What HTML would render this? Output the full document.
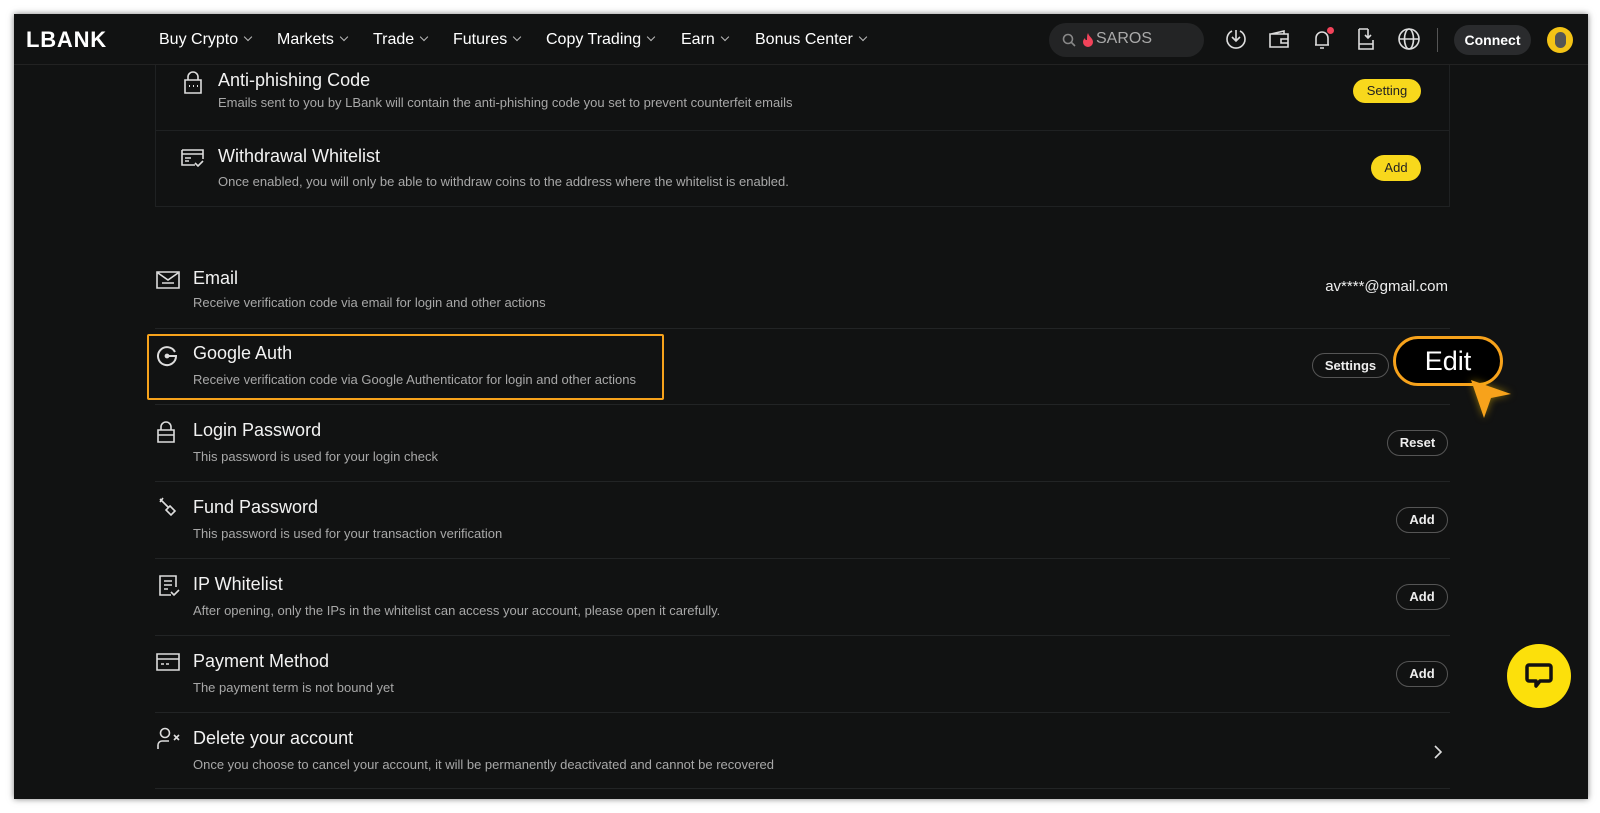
<!DOCTYPE html>
<html><head><meta charset="utf-8"><style>
*{margin:0;padding:0;box-sizing:border-box}
body{width:1600px;height:813px;background:#fff;position:relative;overflow:hidden;font-family:"Liberation Sans",sans-serif;color:#fff}
#app{position:absolute;left:14px;top:14px;width:1574px;height:785px;background:#111212;box-shadow:0 0 6px rgba(0,0,0,.5);overflow:hidden}
.a{position:absolute}
.nav{font-size:16px;top:17px;white-space:nowrap}
.nav:after{content:"";display:inline-block;width:5px;height:5px;border-right:1.2px solid #bbb;border-bottom:1.2px solid #bbb;transform:rotate(45deg);margin-left:7px;vertical-align:4px}
.t{font-size:18px;color:#f2f2f2;white-space:nowrap}
.d{font-size:13px;color:#a8a8a8;white-space:nowrap}
.line{height:1px;background:#222425;left:141px;width:1295px}
.btn{border:1px solid #555;border-radius:14px;font-size:13px;font-weight:bold;text-align:center;color:#eee}
.yb{background:#f8d81c;color:#222;border-radius:13px;font-size:13px;text-align:center}
svg{position:absolute;fill:none;stroke:#ddd;stroke-width:1.6}
</style></head><body><div id="app">
<div class="a" style="left:0;top:0;width:1574px;height:51px;border-bottom:1px solid #222"></div>
<div class="a" style="left:12px;top:13px;font-size:22px;font-weight:bold;letter-spacing:0.8px">LBANK</div>
<div class="a nav" style="left:145px">Buy Crypto</div>
<div class="a nav" style="left:263px">Markets</div>
<div class="a nav" style="left:359px">Trade</div>
<div class="a nav" style="left:439px">Futures</div>
<div class="a nav" style="left:532px">Copy Trading</div>
<div class="a nav" style="left:667px">Earn</div>
<div class="a nav" style="left:741px">Bonus Center</div>
<div class="a" style="left:1035px;top:9px;width:155px;height:34px;border-radius:17px;background:#232425"></div>
<svg style="left:1048px;top:19px" width="14" height="14" viewBox="0 0 14 14"><circle cx="6" cy="6" r="4.5" stroke="#888"/><path d="M9.5 9.5L13 13" stroke="#888"/></svg>
<svg style="left:1068px;top:18px" width="12" height="15" viewBox="0 0 12 15"><path d="M6 1C7 5 11 6 11 10a5 5 0 0 1-10 0c0-2 1-3 2-4 0 2 1 2 2 2C5 5 5 3 6 1z" fill="#f2435a" stroke="none"/></svg>
<div class="a" style="left:1082px;top:16px;font-size:16px;color:#aaa">SAROS</div>
<svg style="left:1210px;top:13px" width="24" height="24" viewBox="0 0 24 24"><path d="M8 4a9 9 0 1 0 8 0"/><path d="M12 3v11M8 10l4 4 4-4"/></svg>
<svg style="left:1254px;top:14px" width="22" height="22" viewBox="0 0 22 22"><path d="M2 6h18v13H2zM3 6l13-3v3M13 11h7v4h-7z"/></svg>
<svg style="left:1296px;top:13px" width="24" height="24" viewBox="0 0 24 24"><path d="M6 18V11a6 6 0 0 1 12 0v7H5h14M10 21h4"/></svg>
<div class="a" style="left:1313px;top:13px;width:7px;height:7px;border-radius:50%;background:#f2435a"></div>
<svg style="left:1340px;top:12px" width="24" height="26" viewBox="0 0 24 26"><path d="M5 3h9M5 3v20h14v-9M5 18h14M14 3v9M11 9l3 3 3-3"/></svg>
<svg style="left:1383px;top:13px" width="24" height="24" viewBox="0 0 24 24"><circle cx="12" cy="12" r="10"/><ellipse cx="12" cy="12" rx="4.5" ry="10"/><path d="M2 12h20"/></svg>
<div class="a" style="left:1423px;top:14px;width:1px;height:24px;background:#555"></div>
<div class="a" style="left:1440px;top:11px;width:77px;height:30px;border-radius:15px;background:#2a2b2d;font-size:14px;font-weight:bold;text-align:center;line-height:30px">Connect</div>
<div class="a" style="left:1533px;top:13px;width:26px;height:26px;border-radius:50%;background:#f3c316"><div class="a" style="left:8px;top:5px;width:11px;height:16px;border-radius:6px;background:#555"></div></div>

<!-- top card -->
<div class="a" style="left:141px;top:51px;width:1295px;height:142px;border:1px solid #1f2122;border-top:none"></div>
<svg style="left:168px;top:57px" width="22" height="24" viewBox="0 0 22 24"><path d="M6 9V6a5 5 0 0 1 10 0v3M3 9h16v13H3z"/><path d="M7 15h1M11 15h1M15 15h1" stroke-width="2"/></svg>
<div class="a t" style="left:204px;top:56px">Anti-phishing Code</div>
<div class="a d" style="left:204px;top:81px">Emails sent to you by LBank will contain the anti-phishing code you set to prevent counterfeit emails</div>
<div class="a yb" style="left:1339px;top:65px;width:68px;height:24px;line-height:24px">Setting</div>
<div class="a" style="left:142px;top:116px;width:1293px;height:1px;background:#1f2122"></div>
<svg style="left:166px;top:134px" width="26" height="20" viewBox="0 0 26 20"><path d="M2 2h21v9M2 2v15h13M2 6h21M5 10h6M5 13h4M15 15l3 3 5-5"/></svg>
<div class="a t" style="left:204px;top:132px">Withdrawal Whitelist</div>
<div class="a d" style="left:204px;top:160px">Once enabled, you will only be able to withdraw coins to the address where the whitelist is enabled.</div>
<div class="a yb" style="left:1357px;top:141px;width:50px;height:26px;line-height:26px">Add</div>

<!-- rows -->
<svg style="left:142px;top:256px" width="24" height="20" viewBox="0 0 24 20"><path d="M1 2h22v16H1zM2 3l10 7 10-7M6 13h12"/></svg>
<div class="a t" style="left:179px;top:254px">Email</div>
<div class="a d" style="left:179px;top:281px">Receive verification code via email for login and other actions</div>
<div class="a" style="right:140px;top:264px;font-size:15px;color:#eee">av****@gmail.com</div>
<div class="a line" style="top:314px"></div>

<div class="a" style="left:133px;top:320px;width:517px;height:66px;border:2.5px solid #f7a21b;border-radius:2px"></div>
<svg style="left:141px;top:329px" width="24" height="24" viewBox="0 0 24 24"><path d="M20 9A9 9 0 1 0 21 13H12" stroke-width="2"/><circle cx="12" cy="13" r="1.6" fill="#ddd"/></svg>
<div class="a t" style="left:179px;top:329px">Google Auth</div>
<div class="a d" style="left:179px;top:358px">Receive verification code via Google Authenticator for login and other actions</div>
<div class="a btn" style="left:1298px;top:339px;width:77px;height:25px;line-height:23px">Settings</div>
<div class="a" style="left:1379px;top:322px;width:110px;height:50px;border:3px solid #f7a21b;border-radius:25px;background:#000;font-size:27px;text-align:center;line-height:44px">Edit</div>
<svg style="left:1455px;top:364px;filter:drop-shadow(0 0 4px rgba(255,200,0,.5))" width="50" height="42" viewBox="0 0 50 42"><path d="M2 2L42 16 22 20 15 40Z" fill="#f7a21b" stroke="none"/></svg>
<div class="a line" style="top:390px"></div>

<svg style="left:142px;top:406px" width="20" height="24" viewBox="0 0 20 24"><path d="M5 10V7a5 5 0 0 1 10 0v3M2 10h16v12H2zM2 15h16"/></svg>
<div class="a t" style="left:179px;top:406px">Login Password</div>
<div class="a d" style="left:179px;top:435px">This password is used for your login check</div>
<div class="a btn" style="left:1373px;top:416px;width:61px;height:26px;line-height:24px">Reset</div>
<div class="a line" style="top:467px"></div>

<svg style="left:143px;top:482px" width="24" height="24" viewBox="0 0 24 24"><path d="M3 3l5 5M6 2l-3 4M8 8l3 3M13 10l5 5-4 4-5-5z"/></svg>
<div class="a t" style="left:179px;top:483px">Fund Password</div>
<div class="a d" style="left:179px;top:512px">This password is used for your transaction verification</div>
<div class="a btn" style="left:1382px;top:493px;width:52px;height:26px;line-height:24px">Add</div>
<div class="a line" style="top:544px"></div>

<svg style="left:143px;top:559px" width="24" height="26" viewBox="0 0 24 26"><path d="M14 22H3V3h16v11M7 8h8M7 12h8M7 16h4M14 19l3 3 5-5"/></svg>
<div class="a t" style="left:179px;top:560px">IP Whitelist</div>
<div class="a d" style="left:179px;top:589px">After opening, only the IPs in the whitelist can access your account, please open it carefully.</div>
<div class="a btn" style="left:1382px;top:570px;width:52px;height:26px;line-height:24px">Add</div>
<div class="a line" style="top:621px"></div>

<svg style="left:142px;top:638px" width="24" height="20" viewBox="0 0 24 20"><path d="M1 2h22v16H1zM1 7h22M5 12h3M10 12h3"/></svg>
<div class="a t" style="left:179px;top:637px">Payment Method</div>
<div class="a d" style="left:179px;top:666px">The payment term is not bound yet</div>
<div class="a btn" style="left:1382px;top:647px;width:52px;height:26px;line-height:24px">Add</div>
<div class="a line" style="top:698px"></div>

<svg style="left:142px;top:713px" width="26" height="24" viewBox="0 0 26 24"><circle cx="9" cy="6" r="4.5"/><path d="M2 22v-4a4 4 0 0 1 4-4h7M18 8l5 5M23 8l-5 5"/></svg>
<div class="a t" style="left:179px;top:714px">Delete your account</div>
<div class="a d" style="left:179px;top:743px">Once you choose to cancel your account, it will be permanently deactivated and cannot be recovered</div>
<svg style="left:1419px;top:731px" width="10" height="14" viewBox="0 0 10 14"><path d="M2 1l6 6-6 6"/></svg>
<div class="a line" style="top:774px"></div>

<div class="a" style="left:1493px;top:630px;width:64px;height:64px;border-radius:50%;background:#fce00b"></div>
<svg style="left:1509px;top:646px" width="32" height="32" viewBox="0 0 32 32"><path d="M6 5h20a2 2 0 0 1 2 2v12a2 2 0 0 1-2 2H17l-4 5v-5H6a2 2 0 0 1-2-2V7a2 2 0 0 1 2-2z" stroke="#111" stroke-width="3.5" stroke-linejoin="round"/></svg>
</div></body></html>
